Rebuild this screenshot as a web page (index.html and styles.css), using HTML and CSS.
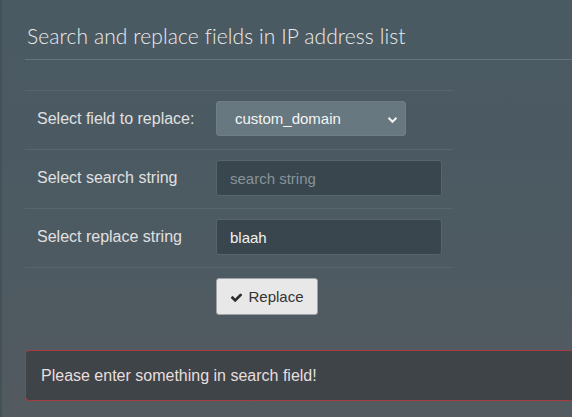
FILE: index.html
```html
<!DOCTYPE html>
<html>
<head>
<meta charset="utf-8">
<link rel="stylesheet" href="styles.css">
</head>
<body>
<div class="page">
  <h1 class="title">Search and replace fields in IP address list</h1>
  <hr class="rule">
  <div class="form">
    <div class="row">
      <div class="label">Select field to replace:</div>
      <div class="field">
        <div class="select">
          <span>custom_domain</span>
          <svg class="chev" width="11" height="8" viewBox="0 0 11 8"><path d="M1.5 1.8 L5.5 5.8 L9.5 1.8" fill="none" stroke="#f2f2f2" stroke-width="2"/></svg>
        </div>
      </div>
    </div>
    <div class="row">
      <div class="label">Select search string</div>
      <div class="field"><div class="input placeholder">search string</div></div>
    </div>
    <div class="row">
      <div class="label">Select replace string</div>
      <div class="field"><div class="input">blaah</div></div>
    </div>
    <div class="row last">
      <div class="label"></div>
      <div class="field"><button class="btn"><svg class="check" width="13" height="13" viewBox="0 0 1792 1792"><path fill="#2b2b2b" d="M1671 566q0 40-28 68l-724 724-136 136q-28 28-68 28t-68-28l-136-136-362-362q-28-28-28-68t28-68l136-136q28-28 68-28t68 28l294 295 656-657q28-28 68-28t68 28l136 136q28 28 28 68z"/></svg><span>Replace</span></button></div>
    </div>
  </div>
  <div class="alert">Please enter something in search field!</div>
</div>
</body>
</html>
```
FILE: styles.css
```css
html, body {
  margin: 0;
  height: 100%;
}
body {
  overflow: hidden;
  background: linear-gradient(180deg, #4a5a63 0%, #4c5a62 50%, #535a60 100%);
  border-left: 2px solid #43525a;
  font-family: "Liberation Sans", Arial, sans-serif;
  color: #e4e4e4;
}
.page {
  padding: 0 0 0 23px;
}
.title {
  margin: 0;
  padding: 23px 0 0 2px;
  font-family: Lato, "Open Sans", sans-serif;
  font-weight: 300;
  font-size: 21px;
  line-height: 26px;
  color: #ececec;
  letter-spacing: 0.1px;
}
.rule {
  margin: 10px 0 0 0;
  border: 0;
  border-top: 1px solid #66757d;
  height: 0;
}
.form {
  margin-top: 30px;
  width: 428px;
}
.row {
  display: flex;
  align-items: flex-start;
  border-top: 1px solid #58666e;
  height: 58px;
}
.label {
  width: 179px;
  padding-left: 12px;
  margin-top: 18px;
  font-size: 16px;
  line-height: 19px;
  color: #e0e0e0;
  flex: none;
}
.field {
  padding-top: 10px;
}
.select {
  width: 190px;
  height: 35px;
  box-sizing: border-box;
  background: #687880;
  border: 1px solid #6f7f87;
  border-radius: 3px;
  display: flex;
  align-items: center;
  justify-content: space-between;
  padding: 0 7px 0 18px;
  font-size: 15px;
  color: #f4f4f4;
}
.chev {
  margin-top: 2px;
}
.input {
  width: 226px;
  height: 36px;
  box-sizing: border-box;
  background: #3a464d;
  border: 1px solid #56646c;
  border-radius: 3px;
  padding: 0 13px;
  display: flex;
  align-items: center;
  font-size: 15px;
  color: #f2f2f2;
}
.input.placeholder {
  color: #87949a;
}
.btn {
  width: 102px;
  height: 37px;
  box-sizing: border-box;
  background: #e8e8e8;
  border: 1px solid #9ea4a8;
  border-radius: 3px;
  font-family: "Liberation Sans", Arial, sans-serif;
  font-size: 15px;
  color: #333;
  padding: 0;
  display: flex;
  align-items: center;
  justify-content: center;
  gap: 5px;
}
.check {
  margin-top: 1px;
}
.alert {
  margin-top: 24px;
  height: 51px;
  box-sizing: border-box;
  border: 1px solid #a83c3e;
  border-right: 0;
  border-radius: 4px 0 0 4px;
  background: #3e4448;
  padding: 0 15px;
  display: flex;
  align-items: center;
  font-size: 16px;
  color: #e8dede;
}
```
